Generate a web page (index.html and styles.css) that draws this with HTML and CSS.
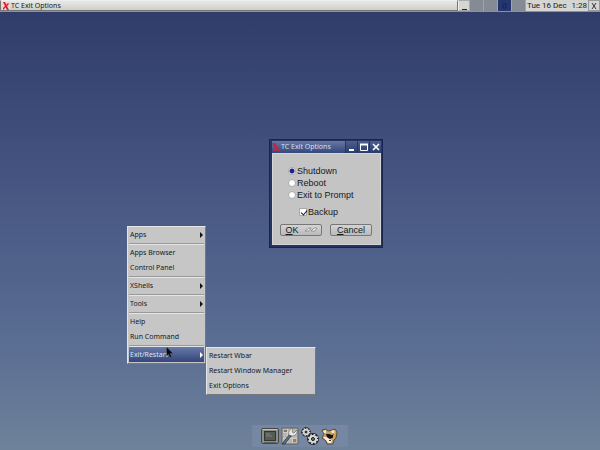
FILE: index.html
```html
<!DOCTYPE html>
<html lang="en">
<head>
<meta charset="utf-8">
<title>TC Exit Options</title>
<link rel="stylesheet" href="styles.css">
</head>
<body>
<div class="desktop">
  <header class="taskbar">
    <button class="task" type="button">
      <svg class="logo" viewBox="0 0 8 8" aria-hidden="true"><rect width="8" height="8" fill="#f0d2d0"/><path d="M1 0h2l4 8H5zM6 1l1 1-5 5-1 1V6z" fill="#d02033"/></svg>
      TC Exit Options
    </button>
    <button class="hide" type="button" aria-label="Minimize"><span class="dash"></span></button>
    <div class="pager">
      <button type="button" aria-label="Workspace 1"></button>
      <button type="button" aria-label="Workspace 2"></button>
      <button type="button" class="current" aria-label="Workspace 3"><svg viewBox="0 0 5 6" aria-hidden="true"><path d="M1 1h3v4H1z" fill="none" stroke="#17235f"/></svg></button>
      <button type="button" aria-label="Workspace 4"></button>
    </div>
    <time class="clock"><span>Tue 16 Dec</span><span>1:28</span></time>
    <button class="quit" type="button" aria-label="Close"><svg viewBox="0 0 8 8" aria-hidden="true"><path d="M2 1l4 6M6 1L2 7" stroke="#333" fill="none"/></svg></button>
  </header>

  <section class="window">
    <div class="titlebar">
      <h1><svg class="logo" viewBox="0 0 8 8" aria-hidden="true"><path d="M0 0h3l5 8H5zM1 4l3 4H2z" fill="#cf1f3d"/></svg>TC Exit Options</h1>
      <button type="button" aria-label="Minimize"><svg viewBox="0 0 10 10" aria-hidden="true"><path d="M2 8h5" stroke="#fff" stroke-width="2"/></svg></button>
      <button type="button" aria-label="Maximize"><svg viewBox="0 0 10 10" aria-hidden="true"><path d="M1.500 2v6.500h7V2" fill="none" stroke="#fff"/><path d="M1 2.500h8" stroke="#fff" stroke-width="2"/></svg></button>
      <button type="button" aria-label="Close"><svg viewBox="0 0 10 10" aria-hidden="true"><path d="M2 2l6 6M8 2L2 8" stroke="#fff" stroke-width="1.600"/></svg></button>
    </div>
    <form class="dialog">
      <div class="choices">
        <label><input type="radio" name="action" checked>Shutdown</label>
        <label><input type="radio" name="action">Reboot</label>
        <label><input type="radio" name="action">Exit to Prompt</label>
      </div>
      <label class="backup"><input type="checkbox" checked>Backup</label>
      <div class="buttons">
        <button type="button"><span><u>O</u>K</span><svg class="enter" viewBox="0 0 12 6" aria-hidden="true"><path d="M0 4l4-3h2L4 4zM6 4l3-3h3l-2 3z" fill="#eee" stroke="#858585" stroke-width=".8"/></svg></button>
        <button type="button"><span><u>C</u>ancel</span></button>
      </div>
    </form>
  </section>

  <nav class="menu root">
    <button type="button" class="more">Apps</button>
    <hr>
    <button type="button">Apps Browser</button>
    <button type="button">Control Panel</button>
    <hr>
    <button type="button" class="more">XShells</button>
    <hr>
    <button type="button" class="more">Tools</button>
    <hr>
    <button type="button">Help</button>
    <button type="button">Run Command</button>
    <hr>
    <button type="button" class="more active">Exit/Restart</button>
  </nav>
  <nav class="menu sub">
    <button type="button">Restart Wbar</button>
    <button type="button">Restart Window Manager</button>
    <button type="button">Exit Options</button>
  </nav>
  <svg class="pointer" viewBox="0 0 7 11" aria-hidden="true"><path d="M.5 0v9l2-2 1.500 3.500 1.500-1L4 6.500h3z" fill="#080808" stroke="#777" stroke-width=".3"/></svg>

  <footer class="dock">
    <button type="button" aria-label="Terminal"><svg viewBox="0 0 18 18" aria-hidden="true"><rect x=".5" y="1.500" width="17" height="15" rx="1.500" fill="#8c8e88" stroke="#44463f"/><path d="M1.500 2.500h15" stroke="#c1c2b9"/><rect x="3.500" y="4.500" width="11" height="9" fill="#555b56" stroke="#30352f"/><path d="M5 7h4M5 9h6" stroke="#7d857e"/><path d="M3 15.500h12" stroke="#5c5f59"/></svg></button>
    <button type="button" aria-label="Control Panel"><svg viewBox="0 0 18 18" aria-hidden="true"><path d="M1 1h16v16H1z" fill="#b9b6ae" stroke="#65645f"/><path d="M2 5.500h14M2 11.500h14M6.500 2v14M11.500 2v14" stroke="#d0cdc6"/><path d="M3 3h3v2H3zM8 7h3v3H8z" fill="#7e7770"/><path d="M12 12h3v3h-3z" fill="#a57770"/><path d="M1 17l7-9 2 1-6 8z" fill="#526f82" stroke="#26353f" stroke-width=".7"/><path d="M8 8c-1-4 1-6 4-7l-1 4 2 1 3-3c1 3-2 6-5 6z" fill="#e8e9e7" stroke="#555" stroke-width=".6"/></svg></button>
    <button type="button" aria-label="Services"><svg viewBox="0 0 18 18" aria-hidden="true"><g stroke="#17191c"><circle cx="5" cy="5" r="4" fill="#d9d9d4" stroke-width="1.500"/><circle cx="5" cy="5" r="3.500" fill="none" stroke="#d9d9d4" stroke-width="1.500" stroke-dasharray="1.200 1.550"/><circle cx="5" cy="5" r="1" fill="#777"/><circle cx="12" cy="12" r="5" fill="#d9d9d4" stroke-width="1.800"/><circle cx="12" cy="12" r="4.500" fill="none" stroke="#d9d9d4" stroke-width="1.500" stroke-dasharray="1.800 1.730"/><circle cx="12" cy="12" r="1.500" fill="#70849b"/></g></svg></button>
    <button type="button" aria-label="Apps"><svg viewBox="0 0 18 18" aria-hidden="true"><path d="M1 3l4-1 2 2 4-1 3-1 2 3-1 6-2 2-1 4H6l-1-3-4-3 2-4z" fill="#c3a16c" stroke="#4c3b27" stroke-width=".8"/><path d="M2 4l3-1v3H3zM10 4l3-1 1 3h-3z" fill="#f5e7cf"/><path d="M5 7h3l3 1 3-1-1 3-4 2-3-2z" fill="#17120f"/><path d="M2 10h3l3 2 3 1-1 3H7l-2-3z" fill="#f7f1e5"/><path d="M8 13h2v1H8z" fill="#3b332c"/><path d="M14 4l1 1-1 5-2 2v-3z" fill="#d6a34e"/></svg></button>
  </footer>
</div>
</body>
</html>
```
FILE: styles.css
```css
* { box-sizing: border-box; }
body {
  margin: 0;
  font: 7px/12px "Noto Sans", "Liberation Sans", sans-serif;
  color: #181818;
}
button {
  margin: 0;
  padding: 0;
  border: 0;
  background: none;
  color: inherit;
  font: inherit;
}
svg { display: block; }
.desktop {
  position: relative;
  min-height: 100vh;
  overflow: hidden;
  background: linear-gradient(#2f3b69, #3c4b78 25%, #4c5d87 52%, #5a6d92 76%, #6e829a);
}
.taskbar {
  display: flex;
  height: 12px;
  background: #d5d5d2;
  border-bottom: 1px solid #8c91a2;
}
.task {
  flex: 1;
  display: flex;
  align-items: center;
  gap: 1px;
  padding-left: 1px;
  border: 1px solid #777;
  border-top-color: #eee;
  background: linear-gradient(#e8e8e6, #cececa);
}
.logo { width: 8px; height: 8px; }
.hide {
  display: flex;
  align-items: end;
  justify-content: center;
  width: 12px;
  border: 1px solid #aaa;
  border-left-color: #eee;
}
.dash { width: 5px; height: 1px; background: #222; }
.pager { display: flex; }
.pager button {
  display: grid;
  place-items: center;
  width: 14px;
  background: #858b95;
  border-right: 1px solid #a0a4aa;
}
.pager .current { background: #25366f; }
.pager svg { width: 5px; height: 6px; }
.clock {
  display: flex;
  justify-content: space-between;
  width: 62px;
  padding: 0 1px;
  font: 8px/11px Roboto, sans-serif;
  white-space: nowrap;
}
.quit { width: 12px; border: 1px solid #999; }
.quit svg { width: 8px; height: 8px; margin: auto; }

.window {
  position: absolute;
  left: 269px;
  top: 139px;
  width: 114px;
  padding: 1px 1px 2px 2px;
  border: 1px solid #18254f;
  background: #26355f;
}
.titlebar { display: flex; gap: 1px; height: 12px; }
.titlebar h1 {
  flex: 1;
  display: flex;
  align-items: center;
  gap: 1px;
  margin: 0;
  font: inherit;
  color: #d8dff0;
  background: linear-gradient(#6678a5, #34477b);
}
.titlebar button {
  display: grid;
  place-items: center;
  width: 11px;
  background: linear-gradient(#4c5f90, #2b3c6e);
}
.titlebar button svg { width: 10px; height: 10px; }
.dialog {
  padding: 11px 8px 8px 7px;
  border: 1px solid #d5d5d5;
  background: #c4c4c4;
  font: 9px/12px "Liberation Sans", sans-serif;
}
.dialog label { display: flex; align-items: center; gap: 1px; }
.dialog input {
  appearance: none;
  flex: none;
  width: 8px;
  height: 8px;
  margin: 0;
  border: 1px solid #aaa;
  background: #fff;
}
.choices { padding-left: 8px; }
.dialog input[type="radio"] { border-radius: 50%; }
.dialog input[type="radio"]:checked { background: radial-gradient(#20208c 2px, #fff 3px); }
.dialog .backup { margin: 5px 0 6px 19px; }
.backup input:checked::before {
  content: "";
  display: block;
  width: 3px;
  height: 5px;
  margin-left: 2px;
  border: solid #15154e;
  border-width: 0 1px 1px 0;
  transform: rotate(40deg);
}
.buttons { display: flex; gap: 8px; }
.buttons button {
  flex: 1;
  display: flex;
  align-items: center;
  justify-content: center;
  gap: 6px;
  height: 12px;
  border: 1px solid #777;
  border-radius: 2px;
  background: linear-gradient(#d4d4d4, #bababa);
}
.enter { width: 12px; height: 6px; }

.menu {
  position: absolute;
  display: flex;
  flex-direction: column;
  padding: 0 1px 1px;
  border: 1px solid #e5e5e5;
  border-right-color: #777;
  border-bottom-color: #777;
  background: #c6c6c6;
}
.root { left: 127px; top: 226px; width: 79px; }
.sub { left: 206px; top: 347px; width: 110px; }
.menu button {
  display: flex;
  align-items: center;
  justify-content: space-between;
  height: 15px;
  padding: 0 1px;
  text-align: left;
}
.menu hr {
  width: 100%;
  height: 2px;
  margin: 1px 0 0;
  border: 0;
  border-top: 1px solid #999;
  background: #e6e6e6;
}
.menu .more::after {
  content: "";
  border: solid transparent;
  border-width: 3px 0 3px 3px;
  border-left-color: #111;
}
.menu .active { color: #dce3f2; background: linear-gradient(#687aa8, #33457a); }
.menu .active::after { border-left-color: #fff; }
.pointer { position: absolute; left: 166px; top: 347px; width: 7px; height: 11px; }

.dock {
  position: absolute;
  left: 50%;
  bottom: 3px;
  display: flex;
  gap: 2px;
  padding: 2px 9px;
  transform: translateX(-50%);
  border-radius: 2px;
  background: #7587a3;
}
.dock svg { width: 18px; height: 18px; }
```
